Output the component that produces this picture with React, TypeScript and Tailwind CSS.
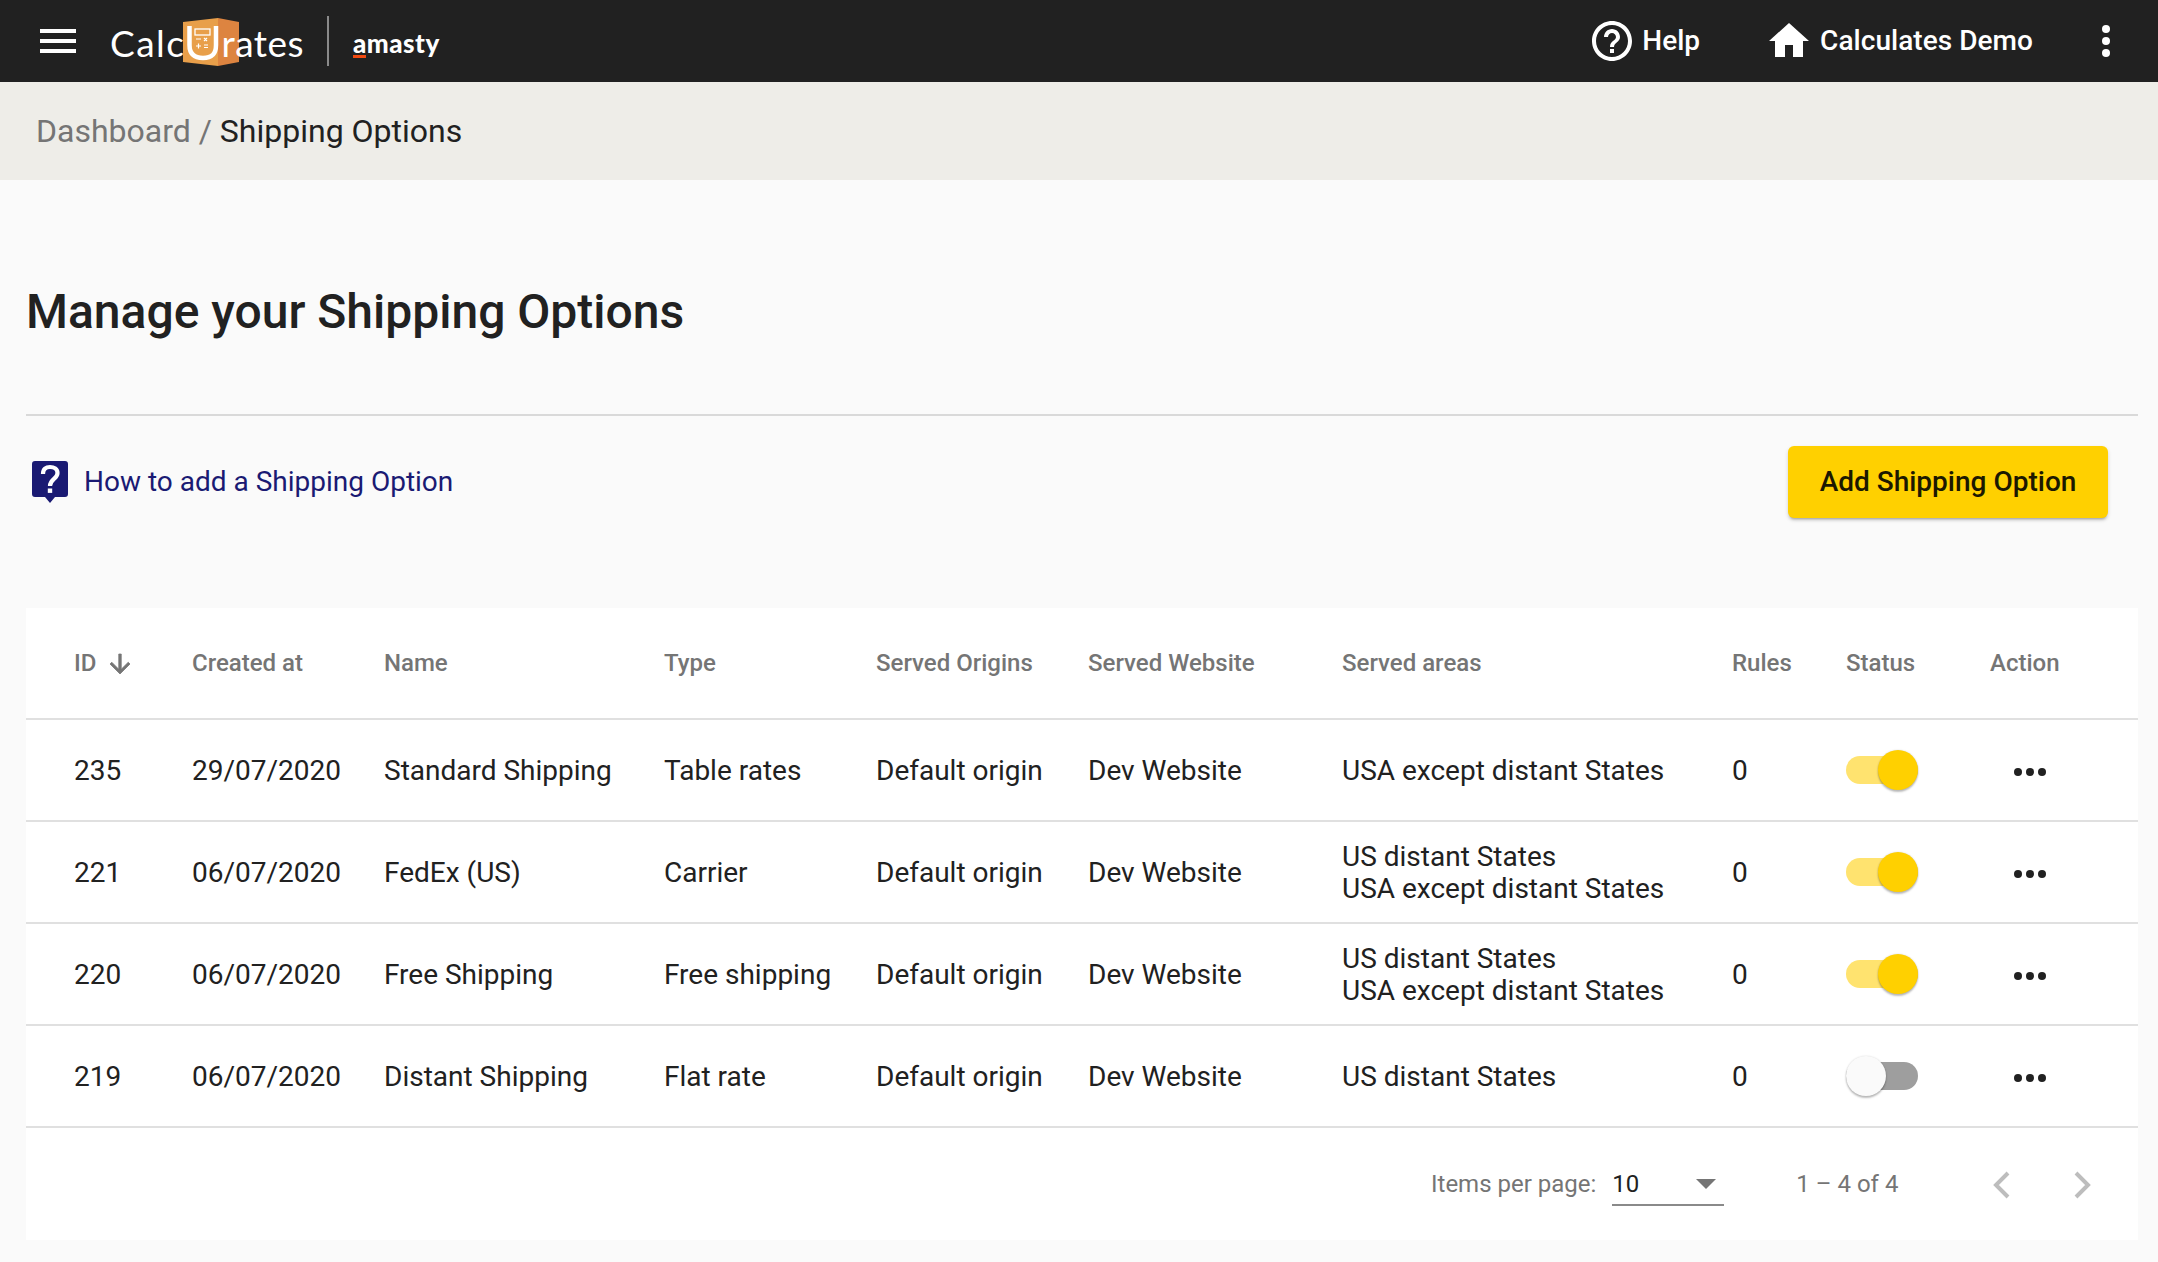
const rows = [
  { id: 235, created: '29/07/2020', name: 'Standard Shipping', type: 'Table rates', areas: ['USA except distant States'], on: true },
  { id: 221, created: '06/07/2020', name: 'FedEx (US)', type: 'Carrier', areas: ['US distant States', 'USA except distant States'], on: true },
  { id: 220, created: '06/07/2020', name: 'Free Shipping', type: 'Free shipping', areas: ['US distant States', 'USA except distant States'], on: true },
  { id: 219, created: '06/07/2020', name: 'Distant Shipping', type: 'Flat rate', areas: ['US distant States'], on: false },
];

function Logo() {
  return (
    <div className="flex items-center h-full ml-[34px]">
      <div className="flex items-center w-[190px] text-white text-[37px] font-normal leading-none font-['Lato',sans-serif] relative">
        <span className="tracking-[1.5px] mt-[3px]">Calc</span>
        <svg viewBox="0 0 56 48" className="w-[56px] h-[48px] -ml-[3px] -mr-[17px] shrink-0 mt-[2px]">
          <path d="M0 4 L35 0 L35 48 L0 44 Z" fill="#e89f4a" />
          <path d="M35 0 L56 4 L56 44 L35 48 Z" fill="#dd8440" />
          <path d="M6.500 8 V27 C6.500 36 11 40 20 40 C29 40 33 36 33 27 V8" fill="none" stroke="#fff" strokeWidth="4.500" />
          <rect x="12" y="11" width="15" height="6" fill="none" stroke="#fff" strokeWidth="1.300" />
          <path d="M13 21h5M21 20l3 3m0-3l-3 3M13 28h5M15.500 25.500v5M21 27h4M21 29.500h4" stroke="#fff" strokeWidth="1.200" fill="none" />
        </svg>
        <span className="relative tracking-[0.5px] mt-[3px]">rates</span>
      </div>
      <div className="w-[2px] h-[50px] bg-[#8a8a8a] ml-[27px]" />
      <div className="relative ml-[24px] mt-[4px] text-white text-[26px] font-black tracking-[0.5px] leading-none font-['Lato',sans-serif]">
        amasty
        <div className="absolute left-0 top-[25px] w-[13px] h-[3px] bg-[#f04a12]" />
      </div>
    </div>
  );
}

function Toggle({ on }: { on: boolean }) {
  return (
    <div className={`relative w-[72px] h-[28px] rounded-full ${on ? 'bg-[#ffe36f]' : 'bg-[#9e9e9e]'}`}>
      <div
        className={`absolute -top-[6px] w-[40px] h-[40px] rounded-full shadow-[0_2px_2px_rgba(0,0,0,0.25),0_0_2px_rgba(0,0,0,0.15)] ${
          on ? 'right-0 bg-[#ffd000]' : 'left-0 bg-[#fafafa]'
        }`}
      />
    </div>
  );
}

function Dots() {
  return (
    <div className="flex gap-[4px] ml-[24px] mt-[2px]">
      <div className="w-[8px] h-[8px] rounded-full bg-[#212121]" />
      <div className="w-[8px] h-[8px] rounded-full bg-[#212121]" />
      <div className="w-[8px] h-[8px] rounded-full bg-[#212121]" />
    </div>
  );
}

export default function App() {
  return (
    <div className="h-[1262px] overflow-hidden bg-[#fafafa] text-[#212121] font-['Roboto',sans-serif]">
      <header className="flex items-center h-[82px] bg-[#212121] pl-[40px] text-white">
        <div className="flex flex-col gap-[6px] w-[36px]">
          <div className="h-[4px] bg-white" />
          <div className="h-[4px] bg-white" />
          <div className="h-[4px] bg-white" />
        </div>
        <Logo />
        <div className="flex items-center ml-auto text-[28px] font-medium">
          <svg viewBox="0 0 24 24" className="w-[48px] h-[48px] fill-white">
            <path d="M11 18h2v-2h-2v2zm1-16C6.48 2 2 6.48 2 12s4.48 10 10 10 10-4.48 10-10S17.52 2 12 2zm0 18c-4.41 0-8-3.59-8-8s3.59-8 8-8 8 3.59 8 8-3.59 8-8 8zm0-14c-2.21 0-4 1.79-4 4h2c0-1.1.9-2 2-2s2 .9 2 2c0 2-3 1.75-3 5h2c0-2.25 3-2.5 3-5 0-2.21-1.79-4-4-4z" />
          </svg>
          <span className="ml-[6px]">Help</span>
          <svg viewBox="0 0 24 24" className="w-[48px] h-[48px] fill-white ml-[65px]">
            <path d="M10 20v-6h4v6h5v-8h3L12 3 2 12h3v8z" />
          </svg>
          <span className="ml-[7px] tracking-[0.05px]">Calculates Demo</span>
          <div className="flex flex-col gap-[4px] ml-[69px] mr-[48px]">
            <div className="w-[8px] h-[8px] rounded-full bg-white" />
            <div className="w-[8px] h-[8px] rounded-full bg-white" />
            <div className="w-[8px] h-[8px] rounded-full bg-white" />
          </div>
        </div>
      </header>

      <div className="flex items-center h-[98px] bg-[#eeede8] pl-[36px] text-[32px]">
        <span className="text-[#757575]">Dashboard /&nbsp;</span>
        <span>Shipping Options</span>
      </div>

      <main className="px-[26px] pr-[20px]">
        <h1 className="pt-[105px] text-[48px] leading-[54px] font-medium">Manage your Shipping Options</h1>
        <div className="h-[2px] bg-[#d9d9d9] mt-[75px]" />

        <div className="flex items-center justify-between h-[72px] mt-[30px] pr-[30px]">
          <a className="flex items-center text-[28px] text-[#1a1a73] pl-[6px]">
            <svg viewBox="0 0 36 42" className="w-[36px] h-[42px]">
              <path d="M3 0h30a3 3 0 0 1 3 3v30a3 3 0 0 1-3 3H23l-5 6-5-6H3a3 3 0 0 1-3-3V3a3 3 0 0 1 3-3z" fill="#1a1a73" />
              <path d="M11 13 C11 8 14 6 18 6 C22 6 25.500 8 25.500 12 C25.500 18 18 18 18 25" fill="none" stroke="#fff" strokeWidth="4.200" />
              <rect x="15.800" y="27.500" width="4.400" height="4.400" fill="#fff" />
            </svg>
            <span className="ml-[16px]">How to add a Shipping Option</span>
          </a>
          <button className="w-[320px] h-[72px] rounded-[6px] bg-[#ffd000] text-[28px] font-medium text-[#1c1800] shadow-[0_3px_3px_-2px_rgba(0,0,0,0.3),0_2px_4px_rgba(0,0,0,0.14)]">
            Add Shipping Option
          </button>
        </div>

        <div className="bg-white mt-[90px]">
          <table className="w-full table-fixed border-collapse text-[28px] leading-[32px]">
            <colgroup>
              <col className="w-[166px]" />
              <col className="w-[192px]" />
              <col className="w-[280px]" />
              <col className="w-[212px]" />
              <col className="w-[212px]" />
              <col className="w-[254px]" />
              <col className="w-[390px]" />
              <col className="w-[114px]" />
              <col className="w-[144px]" />
              <col className="w-[148px]" />
            </colgroup>
            <thead>
              <tr className="h-[111px] border-b-2 border-[#e0e0e0] text-left text-[24px] font-medium text-[#757575]">
                <th className="pl-[48px] font-medium">
                  <div className="flex items-center">
                    ID
                    <svg viewBox="0 0 24 24" className="w-[30px] h-[30px] fill-[#757575] stroke-[#757575] stroke-[0.6] ml-[9px] mt-[2px]">
                      <path d="M20 12l-1.410-1.410L13 16.170V4h-2v12.170l-5.580-5.590L4 12l8 8 8-8z" />
                    </svg>
                  </div>
                </th>
                <th className="font-medium">Created at</th>
                <th className="font-medium">Name</th>
                <th className="font-medium">Type</th>
                <th className="font-medium">Served Origins</th>
                <th className="font-medium">Served Website</th>
                <th className="font-medium">Served areas</th>
                <th className="font-medium">Rules</th>
                <th className="font-medium">Status</th>
                <th className="font-medium">Action</th>
              </tr>
            </thead>
            <tbody>
              {rows.map((r) => (
                <tr key={r.id} className="h-[102px] border-b-2 border-[#e0e0e0]">
                  <td className="pl-[48px] pt-[2px]">{r.id}</td>
                  <td className="pt-[2px]">{r.created}</td>
                  <td className="pt-[2px]">{r.name}</td>
                  <td className="pt-[2px]">{r.type}</td>
                  <td className="pt-[2px]">Default origin</td>
                  <td className="pt-[2px]">Dev Website</td>
                  <td className="pt-[2px]">
                    {r.areas.map((a) => (
                      <div key={a}>{a}</div>
                    ))}
                  </td>
                  <td className="pt-[2px]">0</td>
                  <td>
                    <Toggle on={r.on} />
                  </td>
                  <td className="pt-[2px]">
                    <Dots />
                  </td>
                </tr>
              ))}
            </tbody>
          </table>

          <div className="flex items-center h-[112px] pl-[1405px] text-[24px] text-[#757575]">
            <span>Items per page:</span>
            <div className="flex items-center justify-between w-[112px] h-[42px] ml-[16px] mt-[2px] border-b-2 border-[#8a8a8a] text-[#212121] pr-[8px]">
              <span>10</span>
              <div className="w-0 h-0 border-x-[10px] border-x-transparent border-t-[10px] border-t-[#757575]" />
            </div>
            <span className="ml-[72px]">1 – 4 of 4</span>
            <svg viewBox="0 0 18 28" className="w-[18px] h-[28px] ml-[94px] mt-[2px] fill-none stroke-[#bdbdbd] stroke-[4]">
              <path d="M16 2 L4 14 L16 26" />
            </svg>
            <svg viewBox="0 0 18 28" className="w-[18px] h-[28px] ml-[64px] mt-[2px] fill-none stroke-[#bdbdbd] stroke-[4]">
              <path d="M2 2 L14 14 L2 26" />
            </svg>
          </div>
        </div>
      </main>
    </div>
  );
}
